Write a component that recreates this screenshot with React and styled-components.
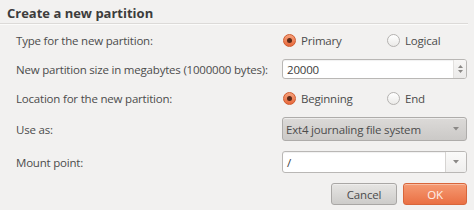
import React from "react";
import styled, { createGlobalStyle } from "styled-components";

const Global = createGlobalStyle`
  html, body { margin: 0; padding: 0; background: #f2f1f0; }
  body { font-family: "Open Sans", "DejaVu Sans", sans-serif; }
`;

const Dialog = styled.div`
  width: 474px;
  height: 210px;
  box-sizing: border-box;
  background: #f2f1f0;
  color: #4c4c4c;
  font-size: 11.5px;
  letter-spacing: -0.2px;
  overflow: hidden;
`;

const Header = styled.div`
  height: 24px;
  box-sizing: border-box;
  padding: 5px 0 0 7px;
  margin-right: 6px;
  border-bottom: 1px solid #dcdad8;
  box-shadow: 0 1px 0 #fbfbfa;
  font-size: 13px;
  font-weight: 700;
  letter-spacing: 0;
  color: #3c3c3c;
  line-height: 17px;
`;

const Form = styled.div`
  display: grid;
  grid-template-columns: 266px 185px;
  padding-left: 16px;
  margin-top: 1px;
`;

const Row = styled.div`
  display: contents;
`;

const Label = styled.div`
  height: ${(p) => p.$h}px;
  display: flex;
  align-items: center;
  white-space: nowrap;
`;

const Cell = styled.div`
  height: ${(p) => p.$h}px;
  display: flex;
  align-items: center;
`;

const RadioGroup = styled.div`
  display: grid;
  grid-template-columns: 104px 1fr;
  padding-left: 1px;
  width: 100%;
`;

const RadioItem = styled.label`
  display: flex;
  align-items: center;
  gap: 5px;
`;

const RadioDot = styled.span`
  width: 13px;
  height: 13px;
  box-sizing: border-box;
  border-radius: 50%;
  display: flex;
  align-items: center;
  justify-content: center;
  border: 1px solid ${(p) => (p.$on ? "#cf5a2e" : "#b4b2b0")};
  background: ${(p) =>
    p.$on
      ? "linear-gradient(#f6a07a, #e8693c)"
      : "linear-gradient(#ffffff, #ebeae8)"};
  &::after {
    content: "";
    display: ${(p) => (p.$on ? "block" : "none")};
    width: 5px;
    height: 5px;
    border-radius: 50%;
    background: #5a2a18;
  }
`;

const Entry = styled.div`
  flex: 1;
  height: ${(p) => p.$h}px;
  box-sizing: border-box;
  display: flex;
  align-items: stretch;
  border: 1px solid #b9b7b5;
  border-radius: 3px;
  background: #ffffff;
  box-shadow: inset 0 1px 1px rgba(0, 0, 0, 0.06);
  overflow: hidden;
`;

const EntryText = styled.span`
  flex: 1;
  display: flex;
  align-items: center;
  padding-left: 4px;
  color: #3c3c3c;
`;

const Spinner = styled.span`
  width: 12px;
  display: flex;
  flex-direction: column;
  align-items: center;
  justify-content: center;
  gap: 2px;
  background: linear-gradient(#f7f6f5, #ebeae9);
  border-left: 1px solid #e2e0de;
`;

const ArrowSide = styled.span`
  width: 20px;
  display: flex;
  align-items: center;
  justify-content: center;
  border-left: 1px solid #d6d4d2;
  background: linear-gradient(#fafaf9, #efeeed);
`;

const Combo = styled.div`
  flex: 1;
  height: 24px;
  box-sizing: border-box;
  display: flex;
  align-items: center;
  justify-content: space-between;
  padding: 0 7px 0 3px;
  border: 1px solid #aeacaa;
  border-radius: 3px;
  background: linear-gradient(#dcdad8, #cbc9c7);
  box-shadow: inset 0 1px 0 rgba(255, 255, 255, 0.5);
  color: #4c4c4c;
`;

const Buttons = styled.div`
  display: flex;
  justify-content: flex-end;
  gap: 6px;
  padding-right: 7px;
  margin-top: 4px;
`;

const Button = styled.button`
  width: ${(p) => p.$w}px;
  height: 22px;
  box-sizing: border-box;
  border-radius: 3px;
  font-family: inherit;
  font-size: 11.5px;
  letter-spacing: -0.2px;
  padding: 0;
  border: 1px solid ${(p) => (p.$primary ? "#d8663b" : "#a9a7a5")};
  background: ${(p) =>
    p.$primary
      ? "linear-gradient(#f59a72, #ea7044)"
      : "linear-gradient(#e6e5e3, #cdccca)"};
  color: ${(p) => (p.$primary ? "#fdf1ea" : "#4c4c4c")};
  box-shadow: inset 0 1px 0 rgba(255, 255, 255, 0.35);
`;

const Tri = ({ up, color = "#8a8886", w = 6 }) => (
  <svg width={w} height={w * 0.6} viewBox="0 0 10 6">
    <path d={up ? "M0 6 L5 0 L10 6 Z" : "M0 0 L10 0 L5 6 Z"} fill={color} />
  </svg>
);

const Radio = ({ on, children }) => (
  <RadioItem>
    <RadioDot $on={on} />
    {children}
  </RadioItem>
);

export default function App() {
  return (
    <>
      <Global />
      <Dialog>
        <Header>Create a new partition</Header>
        <Form>
          <Row>
            <Label $h={30}>Type for the new partition:</Label>
            <Cell $h={30}>
              <RadioGroup>
                <Radio on>Primary</Radio>
                <Radio>Logical</Radio>
              </RadioGroup>
            </Cell>
          </Row>
          <Row>
            <Label $h={28}>New partition size in megabytes (1000000 bytes):</Label>
            <Cell $h={28}>
              <Entry $h={20}>
                <EntryText>20000</EntryText>
                <Spinner>
                  <Tri up w={5} />
                  <Tri w={5} />
                </Spinner>
              </Entry>
            </Cell>
          </Row>
          <Row>
            <Label $h={30}>Location for the new partition:</Label>
            <Cell $h={30}>
              <RadioGroup>
                <Radio on>Beginning</Radio>
                <Radio>End</Radio>
              </RadioGroup>
            </Cell>
          </Row>
          <Row>
            <Label $h={32}>Use as:</Label>
            <Cell $h={32}>
              <Combo>
                <span>Ext4 journaling file system</span>
                <Tri />
              </Combo>
            </Cell>
          </Row>
          <Row>
            <Label $h={34}>Mount point:</Label>
            <Cell $h={34}>
              <Entry $h={22}>
                <EntryText>/</EntryText>
                <ArrowSide>
                  <Tri />
                </ArrowSide>
              </Entry>
            </Cell>
          </Row>
        </Form>
        <Buttons>
          <Button $w={66}>Cancel</Button>
          <Button $w={64} $primary>
            OK
          </Button>
        </Buttons>
      </Dialog>
    </>
  );
}
